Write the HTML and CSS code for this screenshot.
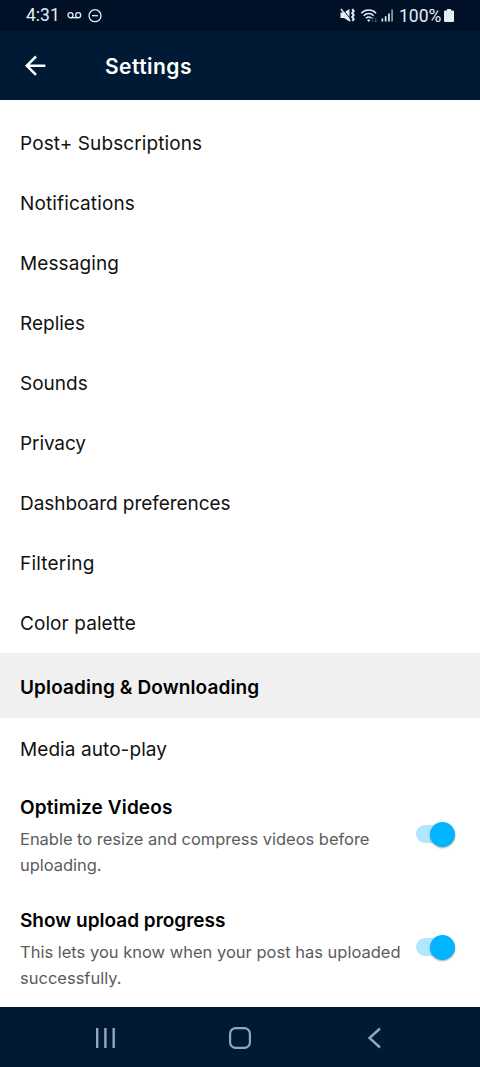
FILE: index.html
```html
<!DOCTYPE html>
<html lang="en">
<head>
<meta charset="utf-8">
<title>Settings</title>
<link rel="stylesheet" href="styles.css">
</head>
<body>
<div class="screen">
  <div class="status">
    <span class="clock">4:31</span>
    <svg class="voicemail" width="15" height="10" viewBox="0 0 15 10" fill="none" stroke="currentColor" stroke-width="1.3"><circle cx="3.5" cy="4.2" r="2.5"/><circle cx="11.2" cy="4.2" r="2.5"/><path d="M3.5 6.700h7.700"/></svg>
    <svg class="dnd" width="14" height="14" viewBox="0 0 14 14" fill="none" stroke="currentColor" stroke-width="1.3"><circle cx="7" cy="6.700" r="6"/><path d="M4 6.700h6"/></svg>
    <svg class="mute" width="15" height="15" viewBox="0 0 15 15" fill="none" stroke="currentColor"><path d="M.5 4.500h3.500l5.500-3.500v12.500L4 10H.5z" fill="currentColor" stroke="none"/><path d="M2.200.5l8 10" stroke="#001127" stroke-width="1"/><path d="M.9 1l9.300 12" stroke-width="1.300"/><path d="M12.200 1.200l1.500 1.900-1.500 2 1.500 2-1.500 2 1.500 2-1.200 1.900" stroke-width="2"/></svg>
    <svg class="wifi" width="18" height="14" viewBox="0 0 17 14" fill="none" stroke="currentColor" stroke-width="1.500"><path d="M.8 4.200c4-4.200 10.800-4.200 14.800 0M3.200 6.700c2.700-2.800 7.300-2.800 10 0M5.500 9.200c1.500-1.500 3.900-1.500 5.400 0"/><path d="M6.500 11l1.700-.7 1.700.7-1.700 2z" fill="currentColor" stroke="none"/><path d="M12.200 13V8.500m-1.300 1.400 1.300-1.400 1.300 1.400M15.200 8.500V13m-1.300-1.400 1.300 1.400 1.300-1.400" stroke-width=".8" opacity=".35"/></svg>
    <svg class="signal" width="13" height="13" viewBox="0 0 13 13" fill="currentColor"><path d="M.5 9.500h1.700V12.500H.5zM3.800 7.300h1.700v5.200H3.800zM7.100 4.500h1.700v8H7.100z"/><path d="M10.200.5H12v12h-1.800z" opacity=".6"/></svg>
    <span class="percent">100%</span>
    <svg class="battery" width="10" height="14" viewBox="0 0 10 14" fill="currentColor"><path d="M3 0h4v1.500h2q1 0 1 1V12q0 1-1 1H1q-1 0-1-1V2.500q0-1 1-1h2z"/></svg>
  </div>
  <header class="bar">
    <svg width="22" height="22" viewBox="0 0 22 22" fill="none" stroke="currentColor" stroke-width="2.500"><path d="M20.300 10.700H2.500M11 1.500L1.800 10.700l9.200 9.200"/></svg>
    <h1 class="title">Settings</h1>
  </header>
  <main class="content">
    <ul class="list">
      <li class="row"><span class="post">Post+ Subscriptions</span></li>
      <li class="row"><span class="notifications">Notifications</span></li>
      <li class="row"><span class="messaging">Messaging</span></li>
      <li class="row"><span>Replies</span></li>
      <li class="row"><span>Sounds</span></li>
      <li class="row"><span class="privacy">Privacy</span></li>
      <li class="row"><span class="dashboard">Dashboard preferences</span></li>
      <li class="row"><span class="filtering">Filtering</span></li>
      <li class="row"><span class="palette">Color palette</span></li>
    </ul>
    <h2 class="section"><span class="uploading">Uploading &amp; Downloading</span></h2>
    <div class="row media"><span class="autoplay">Media auto-play</span></div>
    <div class="option">
      <div class="copy">
        <h3 class="name optimize">Optimize Videos</h3>
        <p class="desc resize">Enable to resize and compress videos before<br>uploading.</p>
      </div>
      <div class="switch"><div class="knob"></div></div>
    </div>
    <div class="option">
      <div class="copy">
        <h3 class="name">Show upload progress</h3>
        <p class="desc">This lets you know when your post has uploaded<br>successfully.</p>
      </div>
      <div class="switch"><div class="knob"></div></div>
    </div>
  </main>
  <nav class="nav">
    <svg width="22" height="22" viewBox="0 0 22 22" stroke="currentColor" stroke-width="2.400"><path d="M3.200 1v20M11.400 1v20M19.700 1v20"/></svg>
    <svg width="22" height="22" viewBox="0 0 22 22" fill="none" stroke="currentColor" stroke-width="2.200"><rect x="1.100" y="1.100" width="19.800" height="19.800" rx="5.500"/></svg>
    <svg width="22" height="22" viewBox="0 0 22 22" fill="none" stroke="currentColor" stroke-width="2.400"><path d="M17 1.500L6.500 11 17 20.500"/></svg>
  </nav>
</div>
</body>
</html>
```
FILE: styles.css
```css
* { box-sizing: border-box; }
body { margin: 0; font-family: Inter, Roboto, sans-serif; background: #fff; }
h1, h2, h3, p, ul { margin: 0; padding: 0; }
.screen { width: 480px; height: 1067px; display: flex; flex-direction: column; overflow: hidden; }

.status { height: 31px; flex: none; display: flex; align-items: center; padding: 0 26px; background: #001127; color: #e4ecf5; }
.status svg { flex: none; }
.clock, .percent { font: 17.5px/31px Roboto, sans-serif; }
.clock { width: 41px; }
.dnd { margin-left: 6px; }
.mute { margin-left: auto; }
.wifi { margin-left: 5px; }
.signal { margin-left: 3px; }
.percent { margin-left: 5px; width: 45px; padding-top: 1px; white-space: nowrap; }
.battery { margin-left: 0; }

.bar { height: 69px; flex: none; display: flex; align-items: center; padding: 0 25px; background: #001a35; color: #fff; }
.title { margin-left: 58px; padding-top: 2px; font-size: 21px; font-weight: 600; line-height: 28px; letter-spacing: 0.45px; }

.content { flex: 1; padding-top: 13px; color: #121212; }
.list { list-style: none; }
.row { height: 60px; padding: 0 20px; display: flex; align-items: center; font-size: 19px; }
.post { letter-spacing: 0.1px; }
.notifications { letter-spacing: 0.12px; }
.messaging { letter-spacing: 0.1px; }
.privacy { letter-spacing: -0.1px; }
.dashboard { letter-spacing: -0.05px; }
.filtering { letter-spacing: 0.2px; }
.palette { letter-spacing: 0.08px; }
.uploading { letter-spacing: 0.12px; }
.autoplay { letter-spacing: 0.08px; }
.section { height: 65px; padding: 3px 20px 0; display: flex; align-items: center; background: #f0f0f0; font-size: 19px; font-weight: 600; color: #000; }
.media { height: 62px; }
.option { height: 113px; padding: 15px 25px 0 20px; display: flex; justify-content: space-between; }
.name { font-size: 19px; font-weight: 600; line-height: 26px; color: #000; }
.optimize { letter-spacing: 0.13px; }
.desc { margin-top: 6px; font-size: 16.5px; line-height: 25.5px; color: #5c5c5c; white-space: nowrap; }
.resize { letter-spacing: -0.03px; }
.copy { width: 385px; }
.switch { flex: none; width: 39px; height: 18px; margin-top: 30px; border-radius: 9px; background: #b0e7ff; display: flex; align-items: center; justify-content: flex-end; }
.knob { width: 25px; height: 25px; flex: none; border-radius: 50%; background: #00b4ff; box-shadow: 0 1px 2px rgba(0, 0, 0, .35); }

.nav { height: 60px; flex: none; display: flex; align-items: center; justify-content: space-between; padding: 2px 95px 0 94px; background: #001a35; color: #96a6b7; }
```
